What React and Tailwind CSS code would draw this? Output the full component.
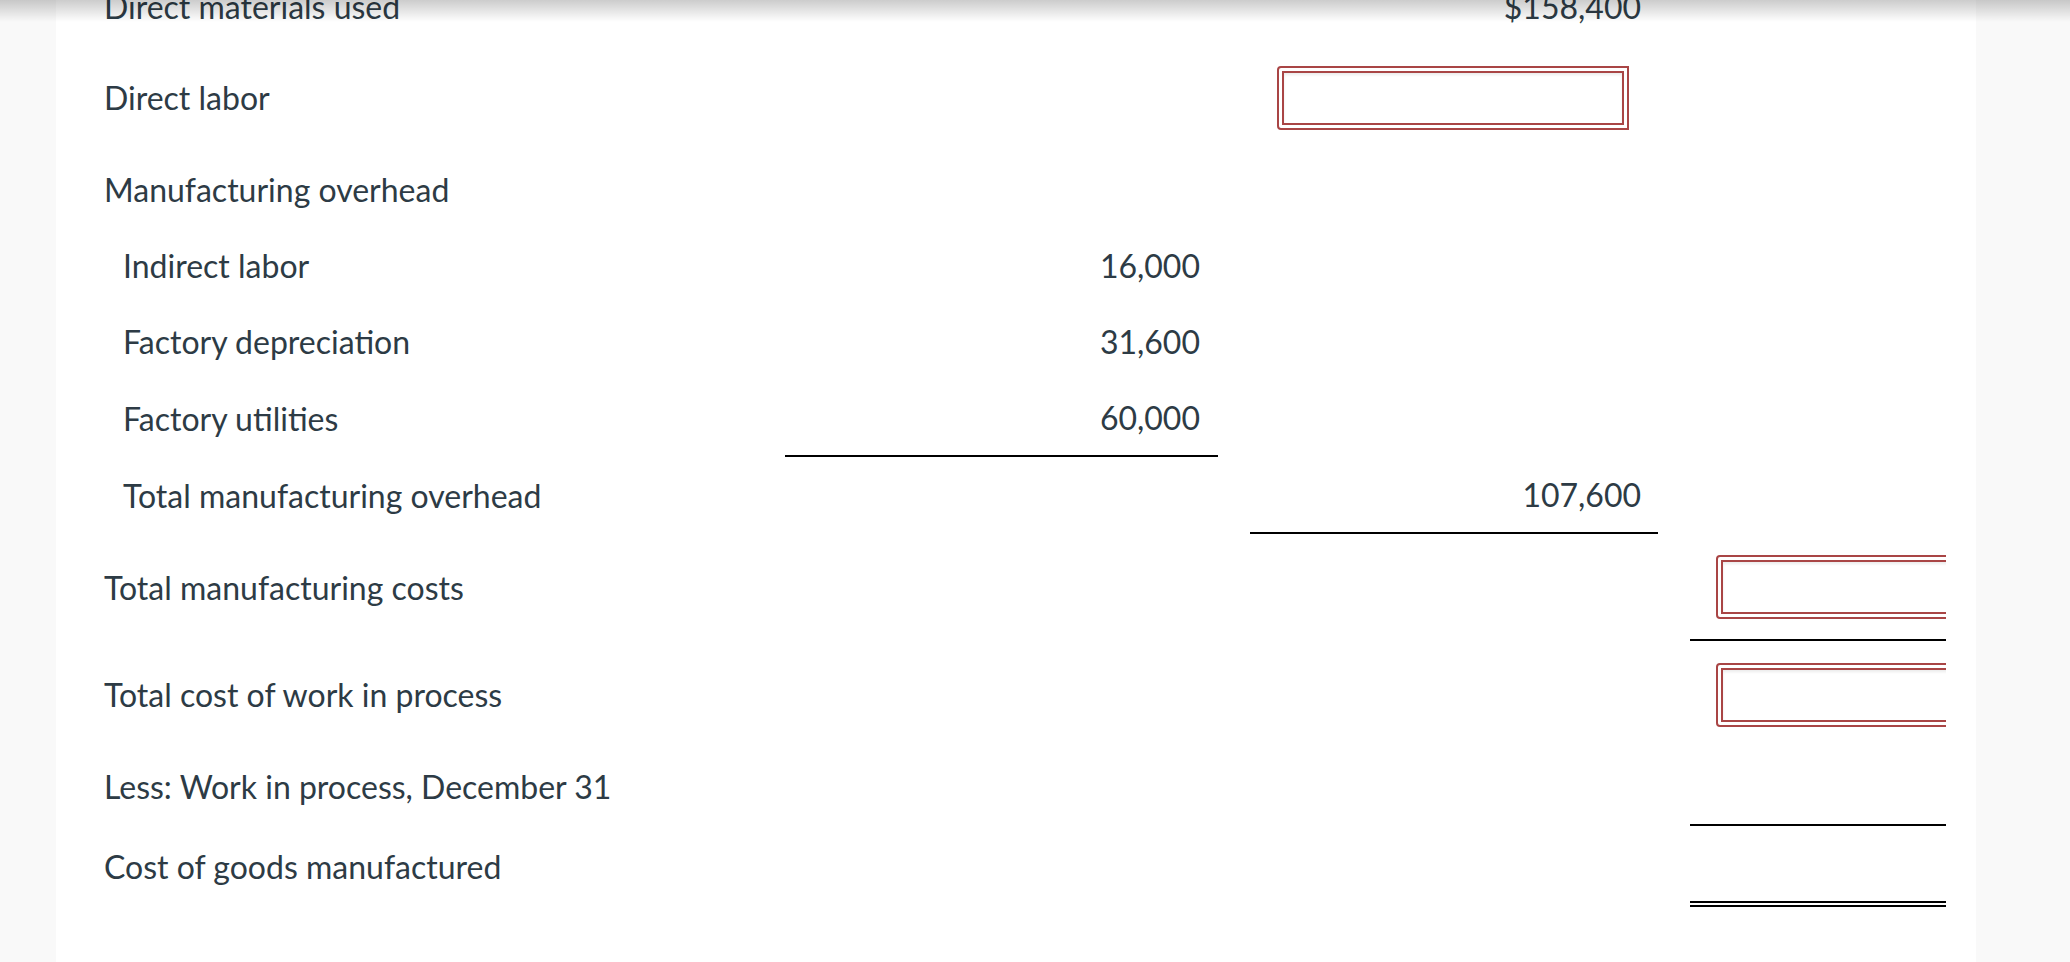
import React from 'react';

const RED = 'border-[#a94545]';

function AnswerBox() {
  return (
    <span className={`flex h-[64px] w-[352px] shrink-0 rounded-l-[4px] border-2 ${RED} bg-white p-[3px]`}>
      <span className={`block h-full w-full border-2 ${RED} bg-white shadow-[inset_0_2px_3px_rgba(0,0,0,0.08)]`} />
    </span>
  );
}

function Row({ h, label, sub, c1, c2, box2, box3, line1, line2, line3 }) {
  return (
    <div className={`flex shrink-0 gap-[32px] ${h}`}>
      <div className={`flex flex-1 items-center whitespace-nowrap ${sub ? 'pl-[19px]' : ''}`}>{label}</div>
      <div className={`flex w-[433px] items-center justify-end pr-[18px] ${line1 || ''}`}>{c1}</div>
      {box2 ? (
        <div className={`flex w-[408px] items-center pl-[27px] ${line2 || ''}`}>
          <AnswerBox />
        </div>
      ) : (
        <div className={`flex w-[408px] items-center justify-end pr-[17px] ${line2 || ''}`}>{c2}</div>
      )}
      <div className={`flex w-[256px] items-center overflow-hidden ${box3 ? 'pl-[26px]' : ''} ${line3 || ''}`}>
        {box3 && <AnswerBox />}
      </div>
    </div>
  );
}

export default function App() {
  return (
    <div className="relative h-screen overflow-hidden bg-[#f9f9f9] font-['Lato','Liberation_Sans',sans-serif] text-[32px] text-[#2d3b45]">
      {/* fixed header shadow */}
      <div className="pointer-events-none absolute inset-x-0 top-0 z-10 h-[22px] bg-linear-to-b from-black/20 to-transparent" />

      <div className="ml-[56px] mr-[94px] flex h-full flex-col overflow-hidden bg-white pl-[48px] pr-[30px]">
        <div className="-mt-[29px] flex flex-col">
          <Row h="h-[72px]" label="Direct materials used" c2="$158,400" />
          <Row h="h-[110px]" label="Direct labor" box2 />
          <Row h="h-[74px]" label="Manufacturing overhead" />
          <Row h="h-[77px]" sub label="Indirect labor" c1="16,000" />
          <Row h="h-[76px]" sub label="Factory depreciation" c1="31,600" />
          <Row h="h-[77px]" sub label="Factory utilities" c1="60,000" line1="border-b-2 border-black" />
          <Row h="h-[77px]" sub label="Total manufacturing overhead" c2="107,600" line2="border-b-2 border-black" />
          <Row h="h-[107px]" label="Total manufacturing costs" box3 line3="border-b-2 border-black" />
          <Row h="h-[107px]" label="Total cost of work in process" box3 />
          <Row h="h-[78px]" label="Less: Work in process, December 31" line3="border-b-2 border-black" />
          <Row h="h-[81px]" label="Cost of goods manufactured" line3="border-b-[6px] border-double border-black" />
        </div>
      </div>
    </div>
  );
}
